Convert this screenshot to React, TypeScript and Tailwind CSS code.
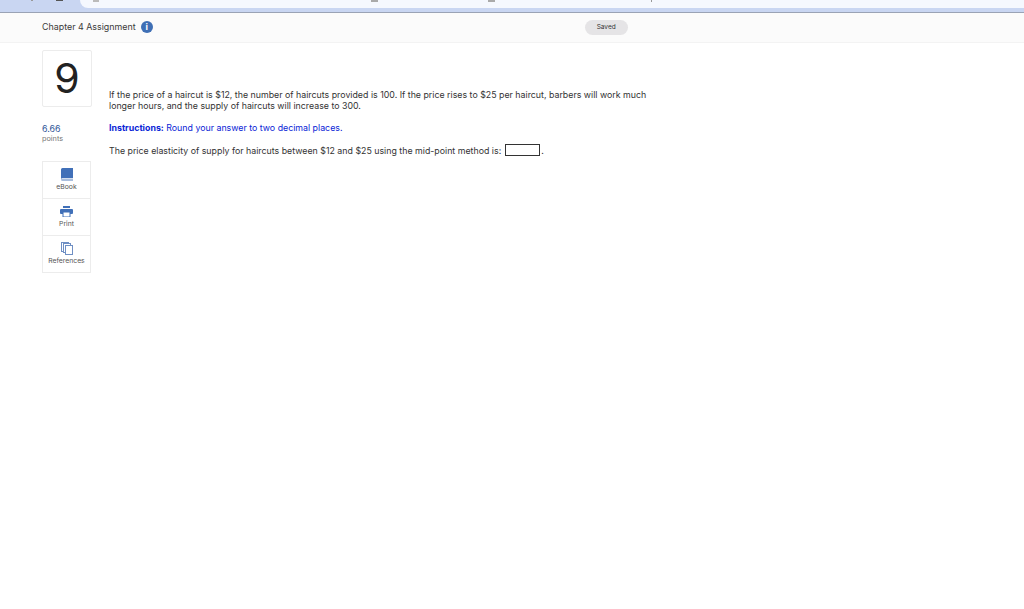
function SideButton({ label, icon }: { label: string; icon: React.ReactNode }) {
  return (
    <div className="-mt-px flex h-[38px] w-[49px] flex-col items-center justify-start border border-[#ececec] bg-white pt-[5px] first:mt-0">
      <div className="flex h-[14px] items-center justify-center">{icon}</div>
      <span className="text-[6.8px] leading-[12px] text-[#555]">{label}</span>
    </div>
  );
}

export default function App() {
  return (
    <div className="min-h-[609px] bg-white font-['Inter',sans-serif] text-[#2d2d2d]">
      {/* browser strip */}
      <div className="relative flex h-[13px] border-b border-[#9aa3b5] bg-[#c9d6f2]">
        <div className="ml-[80px] h-[8px] flex-1 rounded-bl-[10px] bg-[#f5f8fe]"></div>
        <span className="absolute left-[56px] top-0 h-[1px] w-[7px] bg-[#555]"></span>
        <span className="absolute left-[31px] top-0 h-[1px] w-[2px] bg-[#999]"></span>
        <span className="absolute left-[93px] top-0 h-[2px] w-[6px] bg-[#bbb]"></span>
        <span className="absolute left-[371px] top-0 h-[2px] w-[7px] bg-[#aaa]"></span>
        <span className="absolute left-[488px] top-0 h-[2px] w-[7px] bg-[#aaa]"></span>
        <span className="absolute left-[651px] top-0 h-[2px] w-[1px] bg-[#999]"></span>
      </div>

      {/* top bar */}
      <header className="flex h-[30px] items-center border-b border-[#f3f3f3] bg-[#fbfbfb] pb-[2px] pl-[42px]">
        <span className="text-[8.9px] text-[#3a3a3a]">Chapter 4 Assignment</span>
        <span className="ml-[5px] flex h-[12px] w-[12px] items-center justify-center rounded-full bg-[#3f6fb5] text-[9px] font-bold leading-none text-white">i</span>
        <span className="ml-[432px] mt-[2px] flex h-[15px] w-[43px] items-center justify-center rounded-full bg-[#e5e4e6] text-[6.5px] text-[#333]">Saved</span>
      </header>

      <main className="flex pl-[42px] pt-[7px]">
        <aside className="w-[67px]">
          <div className="flex h-[57px] w-[50px] items-center justify-center rounded-[2px] border border-[#ececec] text-[41px] leading-none text-[#222]">9</div>
          <div className="mt-[16px] text-[8.8px] leading-[11px] text-[#2f5597]">6.66</div>
          <div className="text-[7.3px] leading-[10px] text-[#777]">points</div>
          <div className="mt-[17px]">
            <SideButton
              label="eBook"
              icon={
                <svg width="12" height="13" viewBox="0 0 12 13">
                  <path d="M0 1.5A1.5 1.5 0 0 1 1.5 0H12v10H1.5A1.5 1.5 0 0 0 0 11.5Z" fill="#4170b8" />
                  <path d="M0 11.5A1.5 1.5 0 0 1 1.5 10.5H12V13H1.5A1.5 1.5 0 0 1 0 11.5Z" fill="#a9bedd" />
                </svg>
              }
            />
            <SideButton
              label="Print"
              icon={
                <svg width="13" height="11" viewBox="0 0 13 11">
                  <rect x="3" y="0" width="7" height="2" fill="#4170b8" />
                  <rect x="0" y="3" width="13" height="5" rx="1" fill="#4170b8" />
                  <rect x="3" y="6" width="7" height="5" fill="#fff" stroke="#4170b8" />
                </svg>
              }
            />
            <SideButton
              label="References"
              icon={
                <svg width="12" height="13" viewBox="0 0 12 13" fill="#fff" stroke="#6f8fc4">
                  <rect x="0.5" y="0.5" width="7" height="9" />
                  <rect x="2.5" y="1.5" width="7" height="9" />
                  <rect x="4.5" y="3.5" width="7" height="9" />
                </svg>
              }
            />
          </div>
        </aside>

        <section className="w-[560px] pt-[39px] text-[8.82px] leading-[11px] text-[#333]">
          <p>
            If the price of a haircut is $12, the number of haircuts provided is 100. If the price rises to $25 per haircut, barbers will work much longer hours, and the supply of haircuts will increase to 300.
          </p>
          <p className="mt-[11px] text-[#0a24d6]">
            <b>Instructions:</b> Round your answer to two decimal places.
          </p>
          <p className="mt-[11px] flex items-center">
            The price elasticity of supply for haircuts between $12 and $25 using the mid-point method is:
            <span className="ml-[4px] inline-block h-[12px] w-[35px] border border-[#333] bg-white"></span>
            <span className="ml-[1px]">.</span>
          </p>
        </section>
      </main>
    </div>
  );
}
